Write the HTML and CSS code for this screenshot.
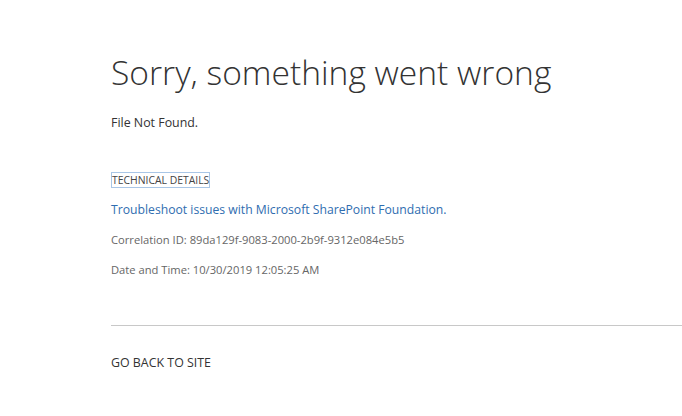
FILE: index.html
```html
<!DOCTYPE html>
<html lang="en">
<head>
<meta charset="utf-8">
<title>Error</title>
<link rel="stylesheet" href="styles.css">
</head>
<body>
<main class="page">
  <h1 class="title">Sorry, something went wrong</h1>
  <p class="msg">File Not Found.</p>
  <div class="details">
    <a class="tech-btn" href="#">TECHNICAL DETAILS</a>
    <a class="link" href="#">Troubleshoot issues with Microsoft SharePoint Foundation.</a>
    <p class="meta">Correlation ID: 89da129f-9083-2000-2b9f-9312e084e5b5</p>
    <p class="meta">Date and Time: 10/30/2019 12:05:25 AM</p>
  </div>
  <hr class="rule">
  <a class="back" href="#">GO BACK TO SITE</a>
</main>
</body>
</html>
```

FILE: styles.css
```css
html, body {
  margin: 0;
  padding: 0;
  background: #ffffff;
}
body {
  font-family: "Open Sans", "Liberation Sans", sans-serif;
  color: #333333;
}
.page {
  display: flex;
  flex-direction: column;
  align-items: flex-start;
  padding: 47px 0 0 111px;
}
.title {
  margin: 0;
  font-size: 33.6px;
  font-weight: 300;
  line-height: 50px;
  color: #333333;
}
.msg {
  margin: 16px 0 0;
  font-size: 12.4px;
  line-height: 20px;
  color: #333333;
}
.details {
  display: flex;
  flex-direction: column;
  align-items: flex-start;
  margin-top: 39px;
}
.tech-btn {
  font-size: 10.4px;
  line-height: 14px;
  padding: 0;
  border: 1px solid #a9c6e6;
  color: #444444;
  text-decoration: none;
}
.link {
  margin-top: 12px;
  font-size: 12.2px;
  line-height: 20px;
  color: #2f6db0;
  text-decoration: none;
}
.meta {
  margin: 10px 0 0;
  font-size: 11.2px;
  line-height: 20px;
  color: #666666;
}
.rule {
  align-self: stretch;
  margin: 45px 0 0;
  border: 0;
  height: 1px;
  background: #c8c8c8;
}
.back {
  margin-top: 27px;
  font-size: 12.4px;
  line-height: 20px;
  color: #333333;
  text-decoration: none;
}
```
